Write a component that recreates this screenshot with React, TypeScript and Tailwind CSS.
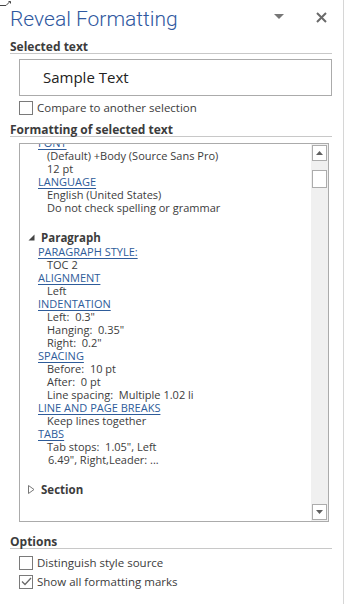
import React from "react";

const LINK = "text-[#2e5c9a] underline underline-offset-[2px] decoration-[#2e5c9a]";

function Check({ checked }: { checked?: boolean }) {
  return (
    <div className="w-[14px] h-[14px] border border-[#7a7a7a] bg-white flex items-center justify-center shrink-0">
      {checked && (
        <svg width="11" height="9" viewBox="0 0 11 9">
          <path d="M1 4.5 L4 7.5 L10 1" fill="none" stroke="#6a6a6a" strokeWidth="1.3" />
        </svg>
      )}
    </div>
  );
}

function Link({ children }: { children: React.ReactNode }) {
  return (
    <div className="h-[13px] pl-[18px] flex items-center">
      <span className={LINK}>{children}</span>
    </div>
  );
}

function Val({ children, extra }: { children: React.ReactNode; extra?: boolean }) {
  return (
    <div className={"h-[13px] flex items-center whitespace-pre " + (extra ? "pl-[28px]" : "pl-[27px]")}>{children}</div>
  );
}

export default function App() {
  return (
    <div
      className="w-[347px] h-[604px] bg-white relative overflow-hidden text-[#3c3c3c]"
      style={{ fontFamily: '"Open Sans", "Noto Sans", sans-serif' }}
    >
      <svg className="absolute left-0 top-0" width="14" height="8" viewBox="0 0 14 8">
        <path d="M0 5.5 H6 L10 1.5 M8.5 1.5 H10.5 V3.5" fill="none" stroke="#444" strokeWidth="1" />
      </svg>
      <div className="w-[344px] h-[604px] border-r border-[#d6d6d6] flex flex-col">
        {/* Title row */}
        <div className="h-[37px] flex items-center pl-[10px] pr-[14px]">
          <div
            className="text-[21px] font-light text-[#2f58a0] leading-none pt-[1px]"
            style={{ fontFamily: 'Roboto, "Open Sans", sans-serif' }}
          >
            Reveal Formatting
          </div>
          <div className="flex-1" />
          <svg width="10" height="6" viewBox="0 0 10 6" className="mr-[32px] mt-[-4px]">
            <path d="M0 0 H10 L5 5 Z" fill="#777" />
          </svg>
          <svg width="11" height="11" viewBox="0 0 11 11" className="mt-[-3px] mr-[2px]">
            <path d="M1 1 L10 10 M10 1 L1 10" stroke="#6a6a6a" strokeWidth="2" />
          </svg>
        </div>

        {/* Selected text */}
        <div className="ml-[10px] mr-[11px] border-b border-[#c8c8c8] h-[17px] flex items-end">
          <span className="text-[12px] font-bold leading-none">Selected text</span>
        </div>
        <div className="mt-[5px] ml-[19px] mr-[11px] h-[37px] border border-[#ababab] flex items-center pl-[23px] text-[15px] text-[#222]">
          Sample Text
        </div>
        <div className="mt-[4px] ml-[19px] flex items-center gap-[4px] h-[15px] text-[11.5px]">
          <Check />
          <span>Compare to another selection</span>
        </div>

        {/* Formatting of selected text */}
        <div className="mt-[5px] ml-[10px] mr-[11px] border-b border-[#c8c8c8] h-[17px] flex items-end">
          <span className="text-[12px] font-bold leading-none">Formatting of selected text</span>
        </div>
        <div className="mt-[6px] ml-[19px] mr-[14px] h-[379px] border border-[#ababab] flex overflow-hidden">
          <div className="flex-1 text-[11px] leading-none pt-[0px] mt-[-8px]">
            <Link>FONT</Link>
            <Val>(Default) +Body (Source Sans Pro)</Val>
            <Val>12 pt</Val>
            <Link>LANGUAGE</Link>
            <Val>English (United States)</Val>
            <Val>Do not check spelling or grammar</Val>
            <div className="h-[16px]" />
            <div className="h-[15px] flex items-center pl-[8px] gap-[6px]">
              <svg width="7" height="7" viewBox="0 0 7 7">
                <path d="M6.5 0.5 V6.5 H0.5 Z" fill="#444" />
              </svg>
              <span className="font-bold text-[11.5px]">Paragraph</span>
            </div>
            <Link>PARAGRAPH STYLE:</Link>
            <Val>TOC 2</Val>
            <Link>ALIGNMENT</Link>
            <Val>Left</Val>
            <Link>INDENTATION</Link>
            <Val>{"Left:  0.3\""}</Val>
            <Val>{"Hanging:  0.35\""}</Val>
            <Val>{"Right:  0.2\""}</Val>
            <Link>SPACING</Link>
            <Val>{"Before:  10 pt"}</Val>
            <Val>{"After:  0 pt"}</Val>
            <Val>{"Line spacing:  Multiple 1.02 li"}</Val>
            <Link>LINE AND PAGE BREAKS</Link>
            <Val>Keep lines together</Val>
            <Link>TABS</Link>
            <Val>{"Tab stops:  1.05\", Left"}</Val>
            <Val extra>{"6.49\", Right,Leader: ..."}</Val>
            <div className="h-[16px]" />
            <div className="h-[15px] flex items-center pl-[8px] gap-[6px]">
              <svg width="7" height="9" viewBox="0 0 7 9">
                <path d="M0.5 0.5 L6 4.5 L0.5 8.5 Z" fill="none" stroke="#777" strokeWidth="1" />
              </svg>
              <span className="font-bold text-[11.5px]">Section</span>
            </div>
          </div>
          <div className="w-[17px] bg-[#f0f0f0] flex flex-col items-center pt-[1px] pb-[1px]">
            <div className="w-[15px] h-[16px] border border-[#acacac] bg-white flex items-center justify-center">
              <svg width="7" height="4" viewBox="0 0 7 4"><path d="M0 4 L3.5 0 L7 4 Z" fill="#606060" /></svg>
            </div>
            <div className="mt-[9px] w-[15px] h-[18px] border border-[#acacac] bg-white" />
            <div className="flex-1" />
            <div className="w-[15px] h-[16px] border border-[#acacac] bg-white flex items-center justify-center">
              <svg width="7" height="4" viewBox="0 0 7 4"><path d="M0 0 L3.5 4 L7 0 Z" fill="#606060" /></svg>
            </div>
          </div>
        </div>

        {/* Options */}
        <div className="mt-[10px] ml-[10px] mr-[11px] border-b border-[#c8c8c8] h-[17px] flex items-end">
          <span className="text-[12px] font-bold leading-none">Options</span>
        </div>
        <div className="mt-[6px] ml-[19px] flex items-center gap-[4px] h-[15px] text-[11.5px]">
          <Check />
          <span>Distinguish style source</span>
        </div>
        <div className="mt-[4px] ml-[19px] flex items-center gap-[4px] h-[15px] text-[11.5px]">
          <Check checked />
          <span>Show all formatting marks</span>
        </div>
      </div>
    </div>
  );
}
